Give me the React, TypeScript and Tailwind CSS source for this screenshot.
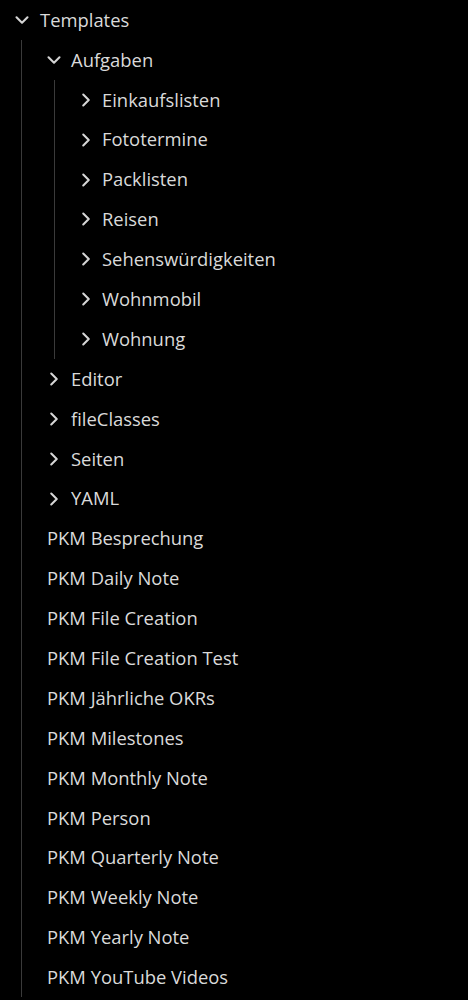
import React from "react";

function Chevron({ open }: { open: boolean }) {
  return (
    <span className="flex w-[22px] h-[22px] items-center justify-center shrink-0">
      <svg
        width="22"
        height="22"
        viewBox="0 0 24 24"
        fill="none"
        stroke="#d4d4d4"
        strokeWidth="2.3"
        strokeLinecap="round"
        strokeLinejoin="round"
        className={open ? "" : "-rotate-90"}
      >
        <path d="M6 9l6 6 6-6" />
      </svg>
    </span>
  );
}

function FolderRow({ name, open, pad, gap }: { name: string; open: boolean; pad: string; gap: string }) {
  return (
    <div className={`flex h-[39.9px] items-center ${pad}`}>
      <Chevron open={open} />
      <span className={gap}>{name}</span>
    </div>
  );
}

const sub = ["Einkaufslisten", "Fototermine", "Packlisten", "Reisen", "Sehenswürdigkeiten", "Wohnmobil", "Wohnung"];
const folders = ["Editor", "fileClasses", "Seiten", "YAML"];
const files = [
  "PKM Besprechung",
  "PKM Daily Note",
  "PKM File Creation",
  "PKM File Creation Test",
  "PKM Jährliche OKRs",
  "PKM Milestones",
  "PKM Monthly Note",
  "PKM Person",
  "PKM Quarterly Note",
  "PKM Weekly Note",
  "PKM Yearly Note",
  "PKM YouTube Videos",
];

export default function App() {
  return (
    <div
      className="w-[468px] h-[1000px] overflow-hidden bg-black text-[#dadada] text-[18.4px] leading-none"
      style={{ fontFamily: '"Open Sans", "Noto Sans", sans-serif' }}
    >
      <FolderRow name="Templates" open pad="pl-[11px]" gap="ml-[7px]" />
      <div className="ml-[21px] border-l border-[#3a3a3a]">
        <FolderRow name="Aufgaben" open pad="pl-[21px]" gap="ml-[6px]" />
        <div className="ml-[32px] border-l border-[#3a3a3a]">
          {sub.map((s) => (
            <FolderRow key={s} name={s} open={false} pad="pl-[20px]" gap="ml-[5px]" />
          ))}
        </div>
        {folders.map((s) => (
          <FolderRow key={s} name={s} open={false} pad="pl-[21px]" gap="ml-[6px]" />
        ))}
        {files.map((f) => (
          <div key={f} className="flex h-[39.9px] items-center pl-[25px]">
            <span>{f}</span>
          </div>
        ))}
      </div>
    </div>
  );
}
